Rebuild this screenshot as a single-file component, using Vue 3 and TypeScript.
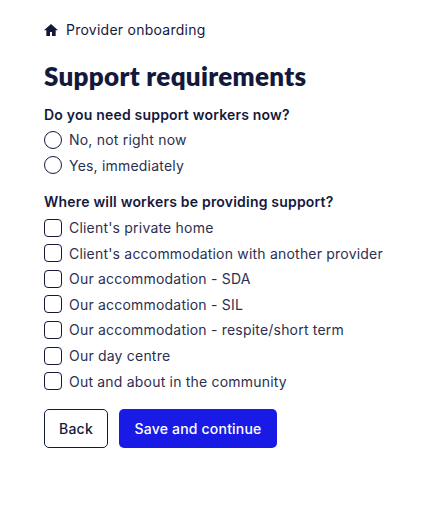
<script setup lang="ts">
const radios: string[] = ['No, not right now', 'Yes, immediately']
const checks: string[] = [
  "Client's private home",
  "Client's accommodation with another provider",
  'Our accommodation - SDA',
  'Our accommodation - SIL',
  'Our accommodation - respite/short term',
  'Our day centre',
  'Out and about in the community',
]
</script>

<template>
  <main class="page">
    <nav class="crumb">
      <svg class="home" viewBox="0 0 24 24" width="16" height="16"><path d="M12 3 1.5 12.5H5V21h5.5v-6h3v6H19v-8.5h3.5z" fill="#14193c" /></svg>
      <span>Provider onboarding</span>
    </nav>
    <h1>Support requirements</h1>
    <fieldset>
      <legend>Do you need support workers now?</legend>
      <label v-for="r in radios" :key="r" class="opt"><span class="radio"></span>{{ r }}</label>
    </fieldset>
    <fieldset>
      <legend>Where will workers be providing support?</legend>
      <label v-for="c in checks" :key="c" class="opt"><span class="check"></span>{{ c }}</label>
    </fieldset>
    <div class="actions">
      <button class="back">Back</button>
      <button class="save">Save and continue</button>
    </div>
  </main>
</template>

<style scoped>
.page { box-sizing: border-box; width: 443px; height: 515px; padding: 20px 44px 0; font-family: Inter, sans-serif; color: #14193c; font-size: 14px; letter-spacing: 0.2px; }
.crumb { display: flex; align-items: center; gap: 7px; height: 20px; line-height: 20px; margin-left: -1px; letter-spacing: 0.25px; }
h1 { margin: 20px 0 0; font-family: Lato, sans-serif; font-size: 26px; line-height: 32px; font-weight: 800; letter-spacing: 0.3px; }
fieldset { border: 0; margin: 0; padding: 0; }
fieldset:first-of-type { margin-top: 13px; }
fieldset + fieldset { margin-top: 14px; }
legend { padding: 0; font-weight: 600; line-height: 20px; margin-bottom: 2px; }
fieldset + fieldset legend { margin-bottom: 2.6px; }
.opt { display: flex; align-items: center; gap: 7px; height: 25.6px; color: #2c3050; }
.radio { width: 18px; height: 18px; border: 1.2px solid #14193c; border-radius: 50%; box-sizing: border-box; }
.check { width: 18px; height: 18px; border: 1.2px solid #14193c; border-radius: 4px; box-sizing: border-box; }
.actions { display: flex; gap: 11px; margin-top: 15.4px; }
button { height: 39px; border-radius: 5px; font: 500 14px Inter, sans-serif; letter-spacing: 0.2px; padding: 0; }
.back { background: #fff; border: 1px solid #14193c; color: #14193c; width: 64px; }
.save { background: #1a1ae6; border: 0; color: #fff; width: 158px; }
</style>
